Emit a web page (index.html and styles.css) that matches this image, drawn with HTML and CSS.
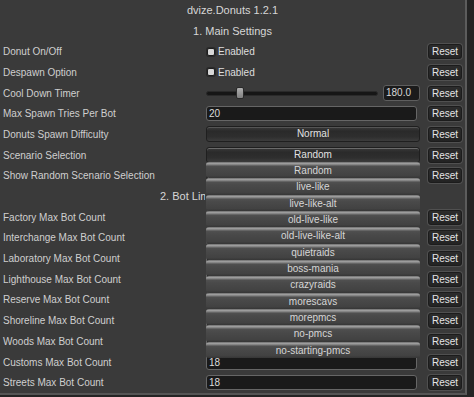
FILE: index.html
```html
<!DOCTYPE html>
<html lang="en">
<head>
    <meta charset="UTF-8">
    <title>dvize.Donuts</title>
    <link rel="stylesheet" href="styles.css">
</head>
<body>
    <div class="panel">
        <div class="title">dvize.Donuts 1.2.1</div>
        <div class="heading">1. Main Settings</div>

        <div class="row">
            <span class="label">Donut On/Off</span>
            <span class="toggle"><i class="box"></i>Enabled</span>
            <button class="reset">Reset</button>
        </div>
        <div class="row">
            <span class="label">Despawn Option</span>
            <span class="toggle"><i class="box"></i>Enabled</span>
            <button class="reset">Reset</button>
        </div>
        <div class="row">
            <span class="label">Cool Down Timer</span>
            <span class="slider">
                <span class="track"><i class="thumb"></i></span>
                <span class="num">180.0</span>
            </span>
            <button class="reset">Reset</button>
        </div>
        <div class="row">
            <span class="label">Max Spawn Tries Per Bot</span>
            <span class="field">20</span>
            <button class="reset">Reset</button>
        </div>
        <div class="row">
            <span class="label">Donuts Spawn Difficulty</span>
            <span class="drop">Normal</span>
            <button class="reset">Reset</button>
        </div>
        <div class="row">
            <span class="label">Scenario Selection</span>
            <span class="drop open">Random</span>
            <button class="reset">Reset</button>
        </div>
        <div class="row">
            <span class="label">Show Random Scenario Selection</span>
            <span class="toggle"><i class="box"></i>Enabled</span>
            <button class="reset">Reset</button>
        </div>

        <!-- heading is hidden behind the open popup past x=205 -->
        <div class="heading cut">2. Bot Limits (Max Bot Count)</div>

        <div class="row">
            <span class="label">Factory Max Bot Count</span>
            <span class="field">8</span>
            <button class="reset">Reset</button>
        </div>
        <div class="row">
            <span class="label">Interchange Max Bot Count</span>
            <span class="field">18</span>
            <button class="reset">Reset</button>
        </div>
        <div class="row">
            <span class="label">Laboratory Max Bot Count</span>
            <span class="field">10</span>
            <button class="reset">Reset</button>
        </div>
        <div class="row">
            <span class="label">Lighthouse Max Bot Count</span>
            <span class="field">18</span>
            <button class="reset">Reset</button>
        </div>
        <div class="row">
            <span class="label">Reserve Max Bot Count</span>
            <span class="field">18</span>
            <button class="reset">Reset</button>
        </div>
        <div class="row">
            <span class="label">Shoreline Max Bot Count</span>
            <span class="field">18</span>
            <button class="reset">Reset</button>
        </div>
        <div class="row">
            <span class="label">Woods Max Bot Count</span>
            <span class="field">18</span>
            <button class="reset">Reset</button>
        </div>
        <div class="row">
            <span class="label">Customs Max Bot Count</span>
            <span class="field">18</span>
            <button class="reset">Reset</button>
        </div>
        <div class="row">
            <span class="label">Streets Max Bot Count</span>
            <span class="field">18</span>
            <button class="reset">Reset</button>
        </div>

        <!-- open popup of Scenario Selection -->
        <ul class="popup">
            <li>Random</li>
            <li>live-like</li>
            <li>live-like-alt</li>
            <li>old-live-like</li>
            <li>old-live-like-alt</li>
            <li>quietraids</li>
            <li>boss-mania</li>
            <li>crazyraids</li>
            <li>morescavs</li>
            <li>morepmcs</li>
            <li>no-pmcs</li>
            <li>no-starting-pmcs</li>
        </ul>
    </div>
</body>
</html>
```

FILE: styles.css
```css
*{padding: 0px; margin: 0px; box-sizing: border-box;}
ul, li{list-style: none;}
body{background: #242424; font-family: "Liberation Sans", Arial, sans-serif; font-size: 10px; color: #cfcfcf;}

.panel{position: relative; width: 467px; height: 395px; padding: 0 0 0 3px; background: #3a3a3a; border-right: 2px solid #5c5c5c; border-bottom: 2px solid #555;}

.title, .heading{height: 20.7px; line-height: 20.7px; text-align: center; font-size: 11px; color: #d6d6d6; padding-right: 3px; white-space: nowrap;}
.heading.cut{width: 202px; overflow: hidden; text-align: left; padding: 0 0 0 157px;}

.row{display: grid; grid-template-columns: 195px 214px 34px; column-gap: 8px; height: 20.7px; align-items: center;}
.label{white-space: nowrap;}

.toggle{display: flex; align-items: center; color: #dedede;}
.toggle .box{display: inline-block; width: 8px; height: 8px; margin: 0 3px 0 1px; border-radius: 2px; background: #d8d8d8; border: 1px solid #1e1e1e; box-shadow: 0 0 0 1px #2a2a2a;}

.slider{display: flex; align-items: center; gap: 5px;}
.track{position: relative; flex: 1; height: 5px; border-radius: 3px; background: #161616; border: 1px solid #2a2a2a;}
.thumb{position: absolute; left: 29px; top: -5px; width: 8px; height: 12px; border-radius: 2px; background: linear-gradient(#b0b0b0, #808080); border: 1px solid #2a2a2a;}
.num{width: 37px; height: 16px; line-height: 14px; padding-left: 2px; background: #1b1b1b; border: 1px solid #5e5e5e; border-radius: 3px; color: #d8d8d8;}

.field{width: 211px; height: 15px; line-height: 13px; padding-left: 2px; background: #1a1a1a; border: 1px solid #666; border-radius: 3px; color: #dcdcdc;}

.drop{height: 16px; line-height: 14px; text-align: center; color: #e2e2e2; border-radius: 3px; border: 1px solid #1f1f1f; background: linear-gradient(#3a3a3a, #2a2a2a 30%, #2e2e2e 70%, #3c3c3c); box-shadow: inset 0 1px 0 #555;}
.drop.open{box-shadow: inset 0 1px 0 #6a6a6a;}

.reset{height: 15px; font-family: inherit; font-size: 10px; color: #e4e4e4; border-radius: 3px; border: 1px solid #1c1c1c; background: linear-gradient(#2c2c2c, #232323); box-shadow: 0 0 0 1px #505050;}

.popup{position: absolute; left: 206px; top: 162px; width: 214px;}
.popup li{height: 16.35px; line-height: 17px; text-align: center; color: #d6d6d6; border-radius: 3px; background: linear-gradient(#6e6e6e 0, #9c9c9c 1.5px, #7a7a7a 3px, #505050 4px, #4a4a4a 40%, #424242 85%, #363636 100%);}
```
